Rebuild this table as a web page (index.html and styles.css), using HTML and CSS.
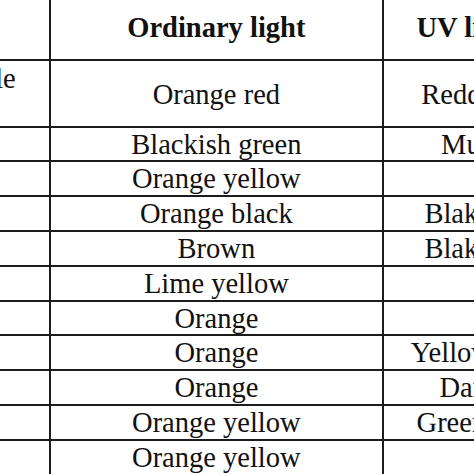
FILE: index.html
```html
<!DOCTYPE html>
<html lang="en">
<head>
<meta charset="utf-8">
<title>Colour of extracts</title>
<link rel="stylesheet" href="styles.css">
</head>
<body>
<table class="grid">
  <thead>
    <tr class="row-tall">
      <th class="c1">No.</th>
      <th class="c2">Ordinary light</th>
      <th class="c3">UV light</th>
    </tr>
  </thead>
  <tbody>
    <tr class="row-tall">
      <td class="c1">Sample<br>1</td>
      <td class="c2">Orange red</td>
      <td class="c3">Reddish</td>
    </tr>
    <tr><td class="c1">2</td><td class="c2">Blackish green</td><td class="c3">Mud</td></tr>
    <tr><td class="c1">3</td><td class="c2">Orange yellow</td><td class="c3"></td></tr>
    <tr><td class="c1">4</td><td class="c2">Orange black</td><td class="c3">Blakish</td></tr>
    <tr><td class="c1">5</td><td class="c2">Brown</td><td class="c3">Blakish</td></tr>
    <tr><td class="c1">6</td><td class="c2">Lime yellow</td><td class="c3"></td></tr>
    <tr><td class="c1">7</td><td class="c2">Orange</td><td class="c3"></td></tr>
    <tr><td class="c1">8</td><td class="c2">Orange</td><td class="c3">Yellowish</td></tr>
    <tr><td class="c1">9</td><td class="c2">Orange</td><td class="c3">Dark</td></tr>
    <tr><td class="c1">10</td><td class="c2">Orange yellow</td><td class="c3">Greenish</td></tr>
    <tr><td class="c1">11</td><td class="c2">Orange yellow</td><td class="c3"></td></tr>
  </tbody>
</table>
</body>
</html>
```

FILE: styles.css
```css
html, body {
  margin: 0;
  padding: 0;
  background: #ffffff;
  overflow: hidden;
}

body {
  width: 474px;
  height: 474px;
}

.grid {
  border-collapse: separate;
  border-spacing: 0;
  table-layout: fixed;
  width: 659.3px;
  margin-top: -7.7px;
  margin-left: -105px;
  border-top: 2px solid #1c1c1c;
  border-left: 2px solid #1c1c1c;
  font-family: "Liberation Serif", "Times New Roman", serif;
  font-size: 28.5px;
  color: #111111;
}

.grid th,
.grid td {
  box-sizing: border-box;
  height: 34.8px;
  padding: 2px 0 0 0;
  border-right: 2px solid #1c1c1c;
  border-bottom: 2px solid #1c1c1c;
  text-align: center;
  vertical-align: middle;
  line-height: 30.8px;
  white-space: nowrap;
  overflow: hidden;
}

.grid th {
  font-weight: bold;
}

.grid .row-tall th,
.grid .row-tall td {
  height: 66.7px;
  line-height: 31.35px;
}

.c1 { width: 154px; }
.c2 { width: 332.7px; }
.c3 { width: 170.6px; }
```
